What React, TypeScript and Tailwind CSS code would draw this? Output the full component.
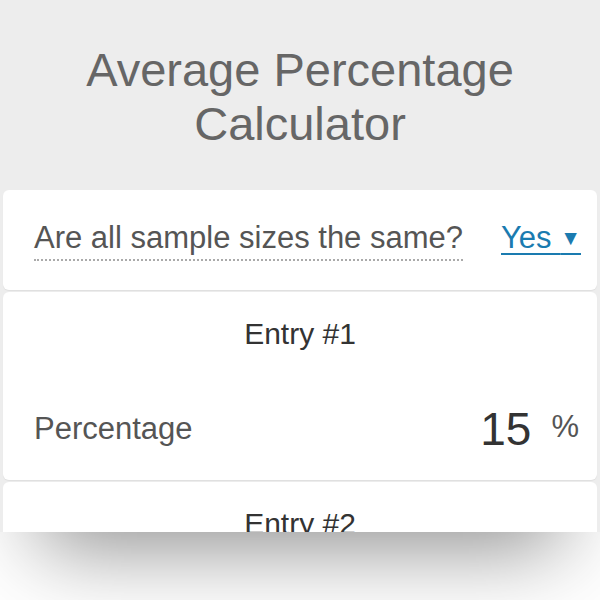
import React from "react";

const font = { fontFamily: '"Liberation Sans", Arial, sans-serif' };

export default function App() {
  return (
    <div className="w-[600px] h-[600px] bg-white overflow-hidden" style={font}>
      <div className="relative h-[532px] overflow-hidden bg-[#ededed] shadow-[0_55px_80px_-40px_rgba(0,0,0,0.45)]">
        <div className="h-[190px] flex items-center justify-center pt-[4px]">
          <h1 className="text-center text-[47px] leading-[54px] text-[#666] font-normal">
            Average Percentage
            <br />
            Calculator
          </h1>
        </div>

        <div className="flex flex-col gap-[2px] px-[3px]">
          <div className="h-[100px] bg-white rounded-[6px] shadow-[0_1px_1px_rgba(0,0,0,0.06)] flex items-center justify-between pl-[31px] pr-[16px]">
            <span className="text-[31px] text-[#555] leading-[36px] pb-[3px] border-b-2 border-dotted border-[#aaa]">
              Are all sample sizes the same?
            </span>
            <span className="text-[31px] text-[#1a7bb0] leading-[36px] underline underline-offset-[5px] decoration-2 mb-[4px]">
              Yes&nbsp;<span className="text-[21px] align-[3px]">▼</span>
            </span>
          </div>

          <div className="h-[188px] bg-white rounded-[6px] shadow-[0_1px_1px_rgba(0,0,0,0.06)] flex flex-col">
            <div className="text-center text-[30px] text-[#333] pt-[25px] leading-[34px]">Entry #1</div>
            <div className="flex items-center justify-between pl-[31px] pr-[18px] mt-[53px]">
              <span className="text-[31px] text-[#555]">Percentage</span>
              <span className="flex items-start gap-[20px]">
                <span className="text-[46px] leading-[50px] text-[#333]">15</span>
                <span className="text-[31px] leading-[40px] text-[#555] mt-[3px]">%</span>
              </span>
            </div>
          </div>

          <div className="h-[120px] bg-white rounded-[6px] flex flex-col">
            <div className="text-center text-[30px] text-[#333] pt-[25px] leading-[34px]">Entry #2</div>
          </div>
        </div>
      </div>
    </div>
  );
}
